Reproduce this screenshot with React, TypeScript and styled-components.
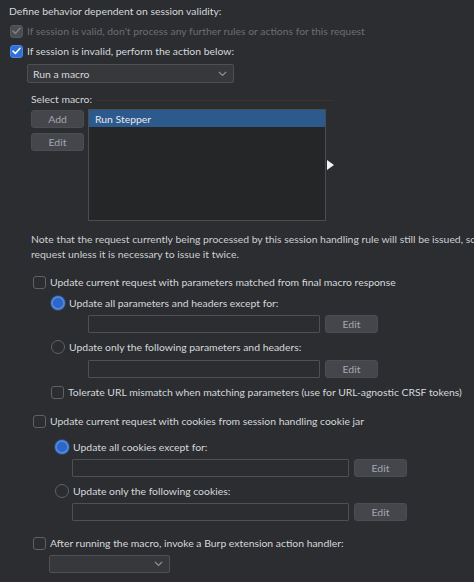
import React from "react";
import styled, { createGlobalStyle, css } from "styled-components";

const Global = createGlobalStyle`
  html, body { margin: 0; padding: 0; background: #2b2d30; }
  body { width: 474px; height: 582px; overflow: hidden; }
  * { box-sizing: border-box; }
`;

const Page = styled.div`
  width: 474px;
  height: 582px;
  overflow: hidden;
  background: #2b2d30;
  color: #d3d5d9;
  font-family: Lato, "Noto Sans", sans-serif;
  font-size: 10.4px;
  padding-top: 1px;
  display: flex;
  flex-direction: column;
  white-space: nowrap;
`;

const Row = styled.div<{ $x: number; $mt?: number }>`
  height: 20px;
  display: flex;
  align-items: center;
  margin-left: ${(p) => p.$x}px;
  margin-top: ${(p) => p.$mt ?? 0}px;
  gap: 4px;
`;

const Label = styled.span<{ $disabled?: boolean }>`
  color: ${(p) => (p.$disabled ? "#6b6e74" : "#d6d8dc")};
`;

const Box = styled.span<{ $checked?: boolean; $disabled?: boolean }>`
  width: 13px;
  height: 13px;
  border-radius: 3px;
  flex: none;
  display: flex;
  align-items: center;
  justify-content: center;
  border: 1px solid #5f6166;
  background: #2b2d30;
  ${(p) =>
    p.$checked &&
    css`
      background: #3270d6;
      border-color: #4a86e6;
    `}
  ${(p) =>
    p.$checked &&
    p.$disabled &&
    css`
      background: #4b4d52;
      border-color: #55575c;
    `}
`;

const Radio = styled.span<{ $on?: boolean }>`
  width: 14px;
  height: 14px;
  border-radius: 50%;
  flex: none;
  border: 1px solid #606368;
  background: #2b2d30;
  ${(p) =>
    p.$on &&
    css`
      border: 2px solid #4f86de;
      background: #2c66c8;
      box-shadow: 0 0 0 1px rgba(60, 110, 200, 0.35);
    `}
`;

const Check = ({ color }: { color: string }) => (
  <svg width="9" height="8" viewBox="0 0 9 8">
    <path d="M1 4.2 L3.4 6.5 L8 1.3" fill="none" stroke={color} strokeWidth="1.6" strokeLinecap="round" strokeLinejoin="round" />
  </svg>
);

const CheckRow = ({
  x,
  mt,
  checked,
  disabled,
  children,
}: {
  x: number;
  mt?: number;
  checked?: boolean;
  disabled?: boolean;
  children: React.ReactNode;
}) => (
  <Row $x={x} $mt={mt}>
    <Box $checked={checked} $disabled={disabled}>
      {checked && <Check color={disabled ? "#7a7d82" : "#ffffff"} />}
    </Box>
    <Label $disabled={disabled}>{children}</Label>
  </Row>
);

const RadioRow = ({ x, mt, on, children }: { x: number; mt?: number; on?: boolean; children: React.ReactNode }) => (
  <Row $x={x} $mt={mt}>
    <Radio $on={on} />
    <Label>{children}</Label>
  </Row>
);

const Select = styled.div<{ $x: number; $w: number; $mt: number; $h: number }>`
  margin-left: ${(p) => p.$x}px;
  margin-top: ${(p) => p.$mt}px;
  width: ${(p) => p.$w}px;
  height: ${(p) => p.$h}px;
  border: 1px solid #4e5055;
  border-radius: 2px;
  background: #36383c;
  display: flex;
  align-items: center;
  justify-content: space-between;
  padding: 0 6px 0 5px;
  color: #d6d8dc;
`;

const Chevron = () => (
  <svg width="9" height="6" viewBox="0 0 9 6">
    <path d="M1 1 L4.5 4.5 L8 1" fill="none" stroke="#8d9096" strokeWidth="1.2" />
  </svg>
);

const MacroLabel = styled.div`
  margin-left: 31px;
  margin-top: 6px;
  height: 20px;
  display: flex;
  align-items: center;
  gap: 4px;
  &::after {
    content: "";
    width: 238px;
    height: 1px;
    background: #3a3231;
    margin-top: 2px;
  }
`;

const MacroArea = styled.div`
  margin-left: 31px;
  display: flex;
  align-items: flex-start;
  gap: 4px;
`;

const ButtonCol = styled.div`
  display: flex;
  flex-direction: column;
  gap: 5px;
  padding-top: 1px;
`;

const Button = styled.div<{ $w: number }>`
  width: ${(p) => p.$w}px;
  height: 18px;
  border-radius: 3px;
  background: #44464b;
  border: 1px solid #4b4d52;
  color: #a4a7ad;
  display: flex;
  align-items: center;
  justify-content: center;
`;

const List = styled.div`
  width: 238px;
  height: 112px;
  border: 1px solid #4a4c50;
  background: #252628;
  padding: 0;
`;

const ListItem = styled.div<{ $selected?: boolean }>`
  height: 17px;
  display: flex;
  align-items: center;
  padding-left: 6px;
  color: #e6e8ec;
  background: ${(p) => (p.$selected ? "#2d5a8c" : "transparent")};
`;

const Pointer = styled.span`
  align-self: center;
  margin-left: -3px;
  width: 0;
  height: 0;
  border-top: 5px solid transparent;
  border-bottom: 5px solid transparent;
  border-left: 7px solid #f2f2f2;
`;

const Note = styled.div`
  margin-left: 31px;
  margin-top: 11px;
  line-height: 15px;
  color: #cdcfd3;
  overflow: hidden;
`;

const FieldRow = styled.div<{ $x: number; $mt: number }>`
  margin-left: ${(p) => p.$x}px;
  margin-top: ${(p) => p.$mt}px;
  display: flex;
  gap: 5px;
`;

const Input = styled.div<{ $w: number }>`
  width: ${(p) => p.$w}px;
  height: 18px;
  border: 1px solid #4e5055;
  border-radius: 1px;
  background: #2b2d30;
`;

const Field = ({ x, mt, w }: { x: number; mt: number; w: number }) => (
  <FieldRow $x={x} $mt={mt}>
    <Input $w={w} />
    <Button $w={53}>Edit</Button>
  </FieldRow>
);

export default function App() {
  return (
    <Page>
      <Global />
      <Row $x={9}>
        <Label>Define behavior dependent on session validity:</Label>
      </Row>
      <CheckRow x={10} checked disabled>
        If session is valid, don't process any further rules or actions for this request
      </CheckRow>
      <CheckRow x={10} checked>
        If session is invalid, perform the action below:
      </CheckRow>
      <Select $x={27} $w={207} $mt={3} $h={19}>
        <span>Run a macro</span>
        <Chevron />
      </Select>
      <MacroLabel>Select macro:</MacroLabel>
      <MacroArea>
        <ButtonCol>
          <Button $w={53}>Add</Button>
          <Button $w={53}>Edit</Button>
        </ButtonCol>
        <List>
          <ListItem $selected>Run Stepper</ListItem>
        </List>
        <Pointer />
      </MacroArea>
      <Note>
        <div>
          Note that the request currently being processed by this session handling rule will still be issued, so you
          should typically configure the macro so that it does not repeat the current
        </div>
        <div>request unless it is necessary to issue it twice.</div>
      </Note>
      <CheckRow x={33} mt={10}>
        Update current request with parameters matched from final macro response
      </CheckRow>
      <RadioRow x={51} mt={1} on>
        Update all parameters and headers except for:
      </RadioRow>
      <Field x={88} mt={2} w={232} />
      <RadioRow x={51} mt={4}>
        Update only the following parameters and headers:
      </RadioRow>
      <Field x={88} mt={3} w={232} />
      <CheckRow x={51} mt={4}>
        Tolerate URL mismatch when matching parameters (use for URL-agnostic CRSF tokens)
      </CheckRow>
      <CheckRow x={33} mt={9}>
        Update current request with cookies from session handling cookie jar
      </CheckRow>
      <RadioRow x={55} mt={6} on>
        Update all cookies except for:
      </RadioRow>
      <Field x={72} mt={2} w={277} />
      <RadioRow x={55} mt={4}>
        Update only the following cookies:
      </RadioRow>
      <Field x={72} mt={2} w={277} />
      <CheckRow x={33} mt={12}>
        After running the macro, invoke a Burp extension action handler:
      </CheckRow>
      <Select $x={49} $w={121} $mt={2} $h={18}>
        <span />
        <Chevron />
      </Select>
    </Page>
  );
}
